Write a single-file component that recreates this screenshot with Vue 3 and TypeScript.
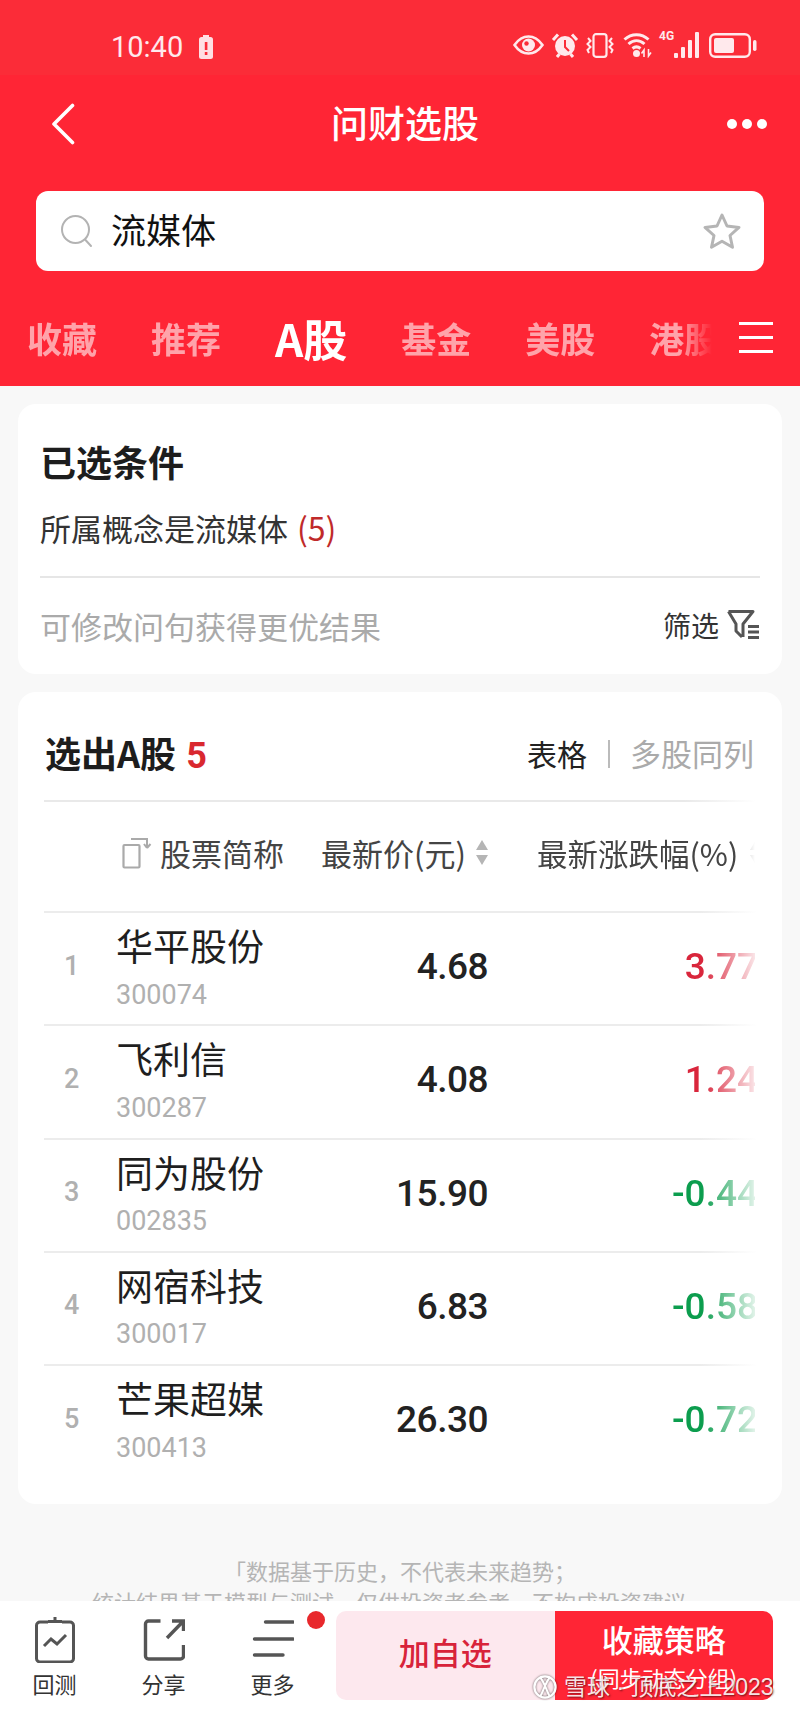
<script setup lang="ts">
interface Stock {
  rank: number;
  name: string;
  code: string;
  price: string;
  change: string;
}

const tabs = ['收藏', '推荐', 'A股', '基金', '美股', '港股'];
const activeTab = 'A股';

const stocks: Stock[] = [
  { rank: 1, name: '华平股份', code: '300074', price: '4.68', change: '3.77' },
  { rank: 2, name: '飞利信', code: '300287', price: '4.08', change: '1.24' },
  { rank: 3, name: '同为股份', code: '002835', price: '15.90', change: '-0.44' },
  { rank: 4, name: '网宿科技', code: '300017', price: '6.83', change: '-0.58' },
  { rank: 5, name: '芒果超媒', code: '300413', price: '26.30', change: '-0.72' },
];
</script>

<template>
  <div class="page">
    <header class="top">
      <div class="status">
        <span class="time">10:40</span>
        <svg class="low-battery" width="16" height="24" viewBox="0 0 16 24">
          <rect x="5" y="0" width="6" height="3" fill="#ffdfe3" />
          <rect x="1" y="2" width="14" height="22" rx="2.5" fill="#ffdfe3" />
          <rect x="6.8" y="7" width="2.6" height="8" fill="#fb2c38" />
          <rect x="6.8" y="17" width="2.6" height="3" fill="#fb2c38" />
        </svg>
        <div class="status-icons">
          <svg width="31" height="20" viewBox="0 0 31 20">
            <path d="M1.500 10C6 3.500 10.500 1.500 15.500 1.500S25 3.500 29.500 10C25 16.500 20.500 18.500 15.500 18.500S6 16.500 1.500 10Z" fill="none" stroke="#ffe9ec" stroke-width="2.600" />
            <circle cx="15.500" cy="10" r="6.500" fill="#ffe9ec" />
            <circle cx="13.500" cy="8.500" r="2.200" fill="#fb2c38" />
          </svg>
          <svg class="alarm" width="28" height="26" viewBox="0 0 28 26">
            <circle cx="14" cy="14" r="10" fill="#ffe9ec" />
            <path d="M14 8v7l4 4" fill="none" stroke="#fb2c38" stroke-width="2" />
            <path d="M2 8 7 2.500M26 8 21 2.500M6 25l2.500-3M22 25l-2.500-3" stroke="#ffe9ec" stroke-width="3" />
          </svg>
          <svg width="28" height="25" viewBox="0 0 28 25">
            <rect x="7.500" y="1.200" width="13" height="22.600" rx="2.500" fill="none" stroke="#ffe9ec" stroke-width="2.200" />
            <path d="M2 5 4.500 8 1.500 11 4.500 14 1.500 17 3 20M26 5 23.500 8 26.500 11 23.500 14 26.500 17 25 20" fill="none" stroke="#ffe9ec" stroke-width="2" />
          </svg>
          <svg width="30" height="26" viewBox="0 0 30 26">
            <path d="M1.500 7.500C8.500 1 18.500 1 25.500 7.500M5.500 12C10.500 7.500 16.500 7.500 21.500 12M9.500 16.500C12 14.500 15 14.500 17.500 16.500" fill="none" stroke="#ffe9ec" stroke-width="3" />
            <circle cx="13.500" cy="21.500" r="3.500" fill="#ffe9ec" />
            <path d="M21 25v-7l-2.500 3.500M25.500 17v7l2.500-3.500" fill="none" stroke="#ffe9ec" stroke-width="1.600" />
          </svg>
          <div class="signal">
            <span class="net">4G</span>
            <svg width="26" height="26" viewBox="0 0 26 26">
              <rect x="0" y="21" width="4" height="5" rx="1" fill="#ffe9ec" />
              <rect x="7" y="15" width="4" height="11" rx="1" fill="#ffe9ec" />
              <rect x="14" y="8" width="4" height="18" rx="1" fill="#ffe9ec" />
              <rect x="21" y="0" width="4" height="26" rx="1" fill="#ffe9ec" />
            </svg>
          </div>
          <svg width="48" height="25" viewBox="0 0 48 25">
            <rect x="1.200" y="1.200" width="39.600" height="22.600" rx="5" fill="none" stroke="#ffe9ec" stroke-width="2.400" />
            <rect x="5" y="5" width="20" height="15" rx="2" fill="#ffe9ec" />
            <rect x="44" y="7" width="3.500" height="11" rx="1.700" fill="#ffe9ec" />
          </svg>
        </div>
      </div>

      <div class="nav">
        <svg class="back" width="24" height="42" viewBox="0 0 24 42">
          <path d="M21.500 2.500 3 21l18.500 18.500" fill="none" stroke="#fff" stroke-width="3.600" stroke-linecap="round" stroke-linejoin="round" />
        </svg>
        <h1 class="nav-title">问财选股</h1>
        <div class="dots"><i></i><i></i><i></i></div>
      </div>

      <div class="search">
        <svg width="34" height="34" viewBox="0 0 34 34">
          <circle cx="15.500" cy="15.500" r="13.500" fill="none" stroke="#b3b3b3" stroke-width="2" />
          <path d="M25.500 26 31 32" stroke="#b3b3b3" stroke-width="2" stroke-linecap="round" />
        </svg>
        <span class="search-text">流媒体</span>
        <svg class="star" width="40" height="38" viewBox="0 0 40 38">
          <path d="M20 3l5 11 12 1.400-9 8.100 2.500 11.800L20 29.300 9.500 35.300 12 23.500 3 15.400 15 14Z" fill="none" stroke="#b5b5b5" stroke-width="3" stroke-linejoin="round" />
        </svg>
      </div>

      <div class="tabbar">
        <div class="tabs">
          <span v-for="tab in tabs" :key="tab" class="tab" :class="{ active: tab === activeTab }">{{ tab }}</span>
        </div>
        <div class="tab-menu"><i></i><i></i><i></i></div>
      </div>
    </header>

    <main class="content">
      <section class="card cond">
        <h2 class="cond-title">已选条件</h2>
        <p class="cond-line">所属概念是流媒体 <span class="count">(5)</span></p>
        <div class="cond-foot">
          <span class="hint">可修改问句获得更优结果</span>
          <span class="filter">筛选</span>
          <svg width="33" height="33" viewBox="0 0 33 33">
            <path d="M1.500 2.500H26L16 15V28M1.500 2.500 9 15V22L15 28" fill="none" stroke="#555" stroke-width="3" stroke-linejoin="round" />
            <path d="M21 17.500H32M21 23H32M21 28.500H32" stroke="#555" stroke-width="3" />
          </svg>
        </div>
      </section>

      <section class="card result">
        <div class="result-head">
          <h2 class="result-title">选出A股 <span class="result-count">5</span></h2>
          <span class="view on">表格</span>
          <span class="view-sep"></span>
          <span class="view">多股同列</span>
        </div>
        <div class="line"></div>

        <div class="grid head">
          <div class="head-name">
            <svg width="30" height="32" viewBox="0 0 30 32">
              <rect x="1.500" y="8" width="16" height="22.500" rx="1" fill="none" stroke="#aaa" stroke-width="2.200" />
              <path d="M9 2H25V11M25 11l3.500-4M25 11l-3-4" fill="none" stroke="#aaa" stroke-width="2" />
            </svg>
            <span>股票简称</span>
          </div>
          <div class="head-price">
            <span>最新价(元)</span>
            <span class="sort"><i class="up"></i><i class="down"></i></span>
          </div>
          <div class="head-change">
            <span>最新涨跌幅(%)</span>
            <span class="sort"><i class="up"></i><i class="down"></i></span>
          </div>
        </div>

        <div v-for="s in stocks" :key="s.code" class="grid row">
          <span class="rank">{{ s.rank }}</span>
          <div class="stock">
            <span class="stock-name">{{ s.name }}</span>
            <span class="stock-code">{{ s.code }}</span>
          </div>
          <span class="price">{{ s.price }}</span>
          <div class="change" :class="s.change.startsWith('-') ? 'down-c' : 'up-c'">
            <span>{{ s.change }}</span>
          </div>
        </div>
      </section>

      <p class="note">
        「数据基于历史，不代表未来趋势；<br />
        统计结果基于模型与测试，仅供投资者参考，不构成投资建议。
      </p>
    </main>

    <footer class="bottom">
      <div class="tool">
        <svg width="40" height="46" viewBox="0 0 40 46">
          <path d="M13 5H5a3.500 3.500 0 0 0-3.500 3.500v33A3.500 3.500 0 0 0 5 45h30a3.500 3.500 0 0 0 3.500-3.500v-33A3.500 3.500 0 0 0 35 5H27" fill="none" stroke="#555" stroke-width="3" />
          <path d="M13 4.500H27M20 0v4" stroke="#555" stroke-width="3" />
          <path d="M9 29l7-7 6 5 9-9" fill="none" stroke="#555" stroke-width="3" />
        </svg>
        <span>回测</span>
      </div>
      <div class="tool">
        <svg width="42" height="46" viewBox="0 0 42 46">
          <path d="M17.500 4H5.500a3 3 0 0 0-3 3v32a3 3 0 0 0 3 3h32a3 3 0 0 0 3-3V28" fill="none" stroke="#555" stroke-width="3.400" />
          <path d="M29 4H40.500V14M40 4.500 24 21" fill="none" stroke="#555" stroke-width="3.400" />
        </svg>
        <span>分享</span>
      </div>
      <div class="tool more">
        <svg width="42" height="46" viewBox="0 0 42 46">
          <path d="M13.500 5H41M2.500 22H41M2.500 38H31" fill="none" stroke="#555" stroke-width="3.400" stroke-linecap="round" />
        </svg>
        <span>更多</span>
        <i class="dot"></i>
      </div>
      <div class="actions">
        <button class="btn-light">加自选</button>
        <button class="btn-red">
          <span class="btn-main">收藏策略</span>
          <span class="btn-sub">(同步动态分组)</span>
        </button>
      </div>
    </footer>

    <div class="mark">
      <svg width="24" height="24" viewBox="0 0 26 26">
        <circle cx="13" cy="13" r="11.500" fill="none" stroke="#fff" stroke-width="2.400" />
        <path d="M8 3c5 6 6 13 10 20M18 3C13 9 12 16 8 23" fill="none" stroke="#fff" stroke-width="2.200" />
      </svg>
      <span>雪球 · 顶底之上2023</span>
    </div>
  </div>
</template>

<style scoped>
.page {
  position: relative;
  width: 800px;
  height: 1711px;
  display: flex;
  flex-direction: column;
  overflow: hidden;
  background: #f8f8f8;
  color: #222;
  font-family: "Noto Sans CJK SC", Roboto, sans-serif;
}
h1, h2, p {
  margin: 0;
  font-weight: inherit;
}
i {
  display: block;
}

/* red top */
.top {
  flex: none;
  height: 386px;
  background: #ff2535;
}
.status {
  height: 75px;
  display: flex;
  align-items: center;
  padding: 19px 43px 0 111px;
  box-sizing: border-box;
  background: #fb2c38;
  color: #ffe9ec;
}
.time {
  font-family: Roboto, sans-serif;
  font-size: 29px;
  line-height: 36px;
}
.low-battery {
  margin-left: 15px;
}
.status-icons {
  margin-left: auto;
  margin-top: -4px;
  display: flex;
  align-items: center;
  gap: 9px;
}
.alarm {
  margin: 0 -2px;
}
.signal {
  position: relative;
  margin-left: 12px;
  display: flex;
}
.net {
  position: absolute;
  left: -15px;
  top: -3px;
  font: 700 12px/14px Roboto, sans-serif;
}
.nav {
  height: 116px;
  display: flex;
  align-items: center;
  justify-content: space-between;
  padding: 0 33px 18px 51px;
  box-sizing: border-box;
}
.nav-title {
  font-size: 37px;
  line-height: 46px;
  font-weight: 500;
  color: #fff;
  margin: -4px 0 0 8px;
}
.dots {
  display: flex;
  gap: 5px;
}
.dots i {
  width: 10px;
  height: 10px;
  border-radius: 50%;
  background: #fff;
}
.search {
  height: 80px;
  margin: 0 36px;
  display: flex;
  align-items: center;
  padding: 0 22px 0 24px;
  background: #fff;
  border-radius: 12px;
}
.search-text {
  margin: 0 0 4px 17px;
  font-size: 35px;
  line-height: 44px;
  color: #111;
}
.star {
  margin-left: auto;
}
.tabbar {
  height: 115px;
  display: flex;
  align-items: center;
  padding-top: 18px;
  box-sizing: border-box;
}
.tabs {
  width: 712px;
  display: flex;
  align-items: center;
  gap: 54px;
  padding-left: 27px;
  box-sizing: border-box;
  overflow: hidden;
  -webkit-mask-image: linear-gradient(to right, #000 680px, transparent 712px);
  mask-image: linear-gradient(to right, #000 680px, transparent 712px);
}
.tab {
  flex: none;
  font-size: 35px;
  line-height: 54px;
  font-weight: 700;
  color: rgba(255, 255, 255, 0.58);
}
.tab.active {
  font-size: 44px;
  color: #fff;
}
.tab-menu {
  margin-left: 27px;
  width: 34px;
  display: flex;
  flex-direction: column;
  gap: 11px;
}
.tab-menu i {
  height: 3px;
  background: #fff;
}

/* cards */
.content {
  flex: 1;
  min-height: 0;
  overflow: hidden;
  padding: 18px 18px 0;
}
.card {
  background: #fff;
  border-radius: 18px;
}
.cond {
  height: 270px;
  padding: 38px 22px 0;
  box-sizing: border-box;
}
.cond-title {
  font-size: 36px;
  line-height: 38px;
  font-weight: 700;
  color: #1d1d1d;
}
.cond-line {
  margin-top: 29px;
  padding-bottom: 30px;
  border-bottom: 2px solid #e6e6e6;
  font-size: 31px;
  line-height: 36px;
  color: #333;
}
.count {
  margin-left: 2px;
  font-size: 32px;
  color: #c02a2a;
}
.cond-foot {
  margin-top: 27px;
  height: 40px;
  display: flex;
  align-items: center;
  font-size: 31px;
}
.hint {
  color: #aaa;
}
.filter {
  margin-left: auto;
  margin-right: 8px;
  font-size: 28px;
  color: #333;
}
.result {
  margin-top: 18px;
  height: 812px;
  padding: 42px 26px 0 26px;
  box-sizing: border-box;
}
.result-head {
  height: 40px;
  display: flex;
  align-items: center;
  padding: 0 2px 0 1px;
}
.result-title {
  margin-right: auto;
  font-size: 36px;
  line-height: 40px;
  font-weight: 700;
  color: #1d1d1d;
}
.result-count {
  margin-left: 2px;
  font-family: Roboto, sans-serif;
  font-size: 36px;
  color: #d9282f;
}
.view {
  margin-bottom: 3px;
  font-size: 30px;
  line-height: 40px;
  color: #aaa;
}
.view.on {
  color: #222;
}
.view-sep + .view {
  font-size: 31px;
}
.view-sep {
  width: 2px;
  height: 28px;
  margin: 0 20px 0 21px;
  background: #bbb;
}
.line {
  margin-top: 26px;
  height: 2px;
  background: linear-gradient(to right, #e9e9e9 90%, #fff);
}

/* table */
.grid {
  display: grid;
  grid-template-columns: 73px 183px 189px 266px;
  align-items: center;
}
.head {
  height: 109px;
  padding-bottom: 8px;
  box-sizing: border-box;
  font-size: 31px;
  color: #444;
  line-height: 40px;
}
.head-name {
  grid-column: 1 / 3;
  padding-left: 78px;
  display: flex;
  align-items: center;
  gap: 8px;
}
.head-price {
  display: flex;
  align-items: center;
  justify-content: flex-end;
  gap: 10px;
  padding-right: 1px;
}
.head-change {
  display: flex;
  align-items: center;
  gap: 12px;
  padding-left: 48px;
  font-size: 30.500px;
  white-space: nowrap;
  overflow: hidden;
  -webkit-mask-image: linear-gradient(to right, #000 250px, transparent 266px);
  mask-image: linear-gradient(to right, #000 250px, transparent 266px);
}
.sort {
  display: flex;
  flex-direction: column;
  gap: 5px;
  flex: none;
}
.sort i {
  width: 0;
  height: 0;
  border-left: 6px solid transparent;
  border-right: 6px solid transparent;
}
.sort .up {
  border-bottom: 10px solid #b5b5b5;
}
.sort .down {
  border-top: 10px solid #b5b5b5;
}
.row {
  height: 113.25px;
  box-sizing: border-box;
  border-top: 2px solid transparent;
  border-image: linear-gradient(to right, #ececec 92%, #fff) 1;
}
.rank {
  padding-left: 20px;
  padding-bottom: 6px;
  font-family: Roboto, sans-serif;
  font-size: 27px;
  font-weight: 500;
  color: #b0b0b0;
}
.stock {
  display: flex;
  flex-direction: column;
  margin-left: -1px;
  padding-bottom: 6.500px;
}
.stock-name {
  font-size: 37px;
  line-height: 50px;
  color: #1f1f1f;
}
.stock-code {
  margin-top: 8.500px;
  font-family: Roboto, sans-serif;
  font-size: 27px;
  line-height: 32px;
  color: #b0b0b0;
}
.price {
  padding: 0 1px 4px 0;
  text-align: right;
  font-family: Roboto, sans-serif;
  font-size: 37px;
  font-weight: 500;
  letter-spacing: -0.5px;
  color: #222;
}
.change {
  padding-bottom: 4px;
  display: flex;
  justify-content: flex-end;
  overflow: hidden;
  font-family: Roboto, sans-serif;
  font-size: 37px;
  font-weight: 500;
  -webkit-mask-image: linear-gradient(to right, #000 213px, rgba(0, 0, 0, 0.12) 266px);
  mask-image: linear-gradient(to right, #000 213px, rgba(0, 0, 0, 0.12) 266px);
}
.change span {
  flex: none;
  margin-right: -3px;
}
.up-c {
  color: #d9263c;
}
.down-c {
  color: #0c9d4e;
}
.note {
  margin-top: 51px;
  text-align: center;
  font-size: 22px;
  line-height: 31px;
  color: #b5b5b5;
}

/* bottom bar */
.bottom {
  flex: none;
  height: 110px;
  display: flex;
  padding: 10px 27px 0 0;
  box-sizing: border-box;
  background: #fff;
}
.tool {
  position: relative;
  width: 109px;
  display: flex;
  flex-direction: column;
  align-items: center;
  font-size: 22px;
  line-height: 28px;
  color: #333;
}
.tool svg {
  margin-top: 6px;
  margin-bottom: 6px;
}
.dot {
  position: absolute;
  left: 89px;
  top: 0;
  width: 18px;
  height: 18px;
  border-radius: 50%;
  background: #e8282c;
}
.actions {
  margin-left: 9px;
  flex: 1;
  height: 89px;
  display: flex;
  border-radius: 10px;
  overflow: hidden;
}
.actions button {
  flex: 1;
  border: 0;
  padding: 0;
  font-family: inherit;
  display: flex;
  flex-direction: column;
  align-items: center;
  justify-content: center;
}
.actions .btn-light {
  padding-bottom: 8px;
  background: #fde8ee;
  color: #d8233a;
  font-size: 31px;
  font-weight: 500;
}
.actions .btn-red {
  padding-bottom: 4px;
  background: #ff2535;
  color: #fff;
}
.btn-main {
  font-size: 31px;
  line-height: 46px;
  font-weight: 500;
}
.btn-sub {
  font-size: 22px;
  line-height: 30px;
}
.mark {
  position: absolute;
  left: 533px;
  top: 1672px;
  display: flex;
  align-items: center;
  gap: 7px;
  font-family: "Liberation Sans", "Noto Sans CJK SC", sans-serif;
  font-size: 23px;
  line-height: 30px;
  white-space: nowrap;
  color: rgba(255, 255, 255, 0.9);
  text-shadow: 1px 1px 2px rgba(0, 0, 0, 0.55);
}
.mark svg {
  filter: drop-shadow(0 0 1px rgba(0, 0, 0, 0.6));
}
</style>
